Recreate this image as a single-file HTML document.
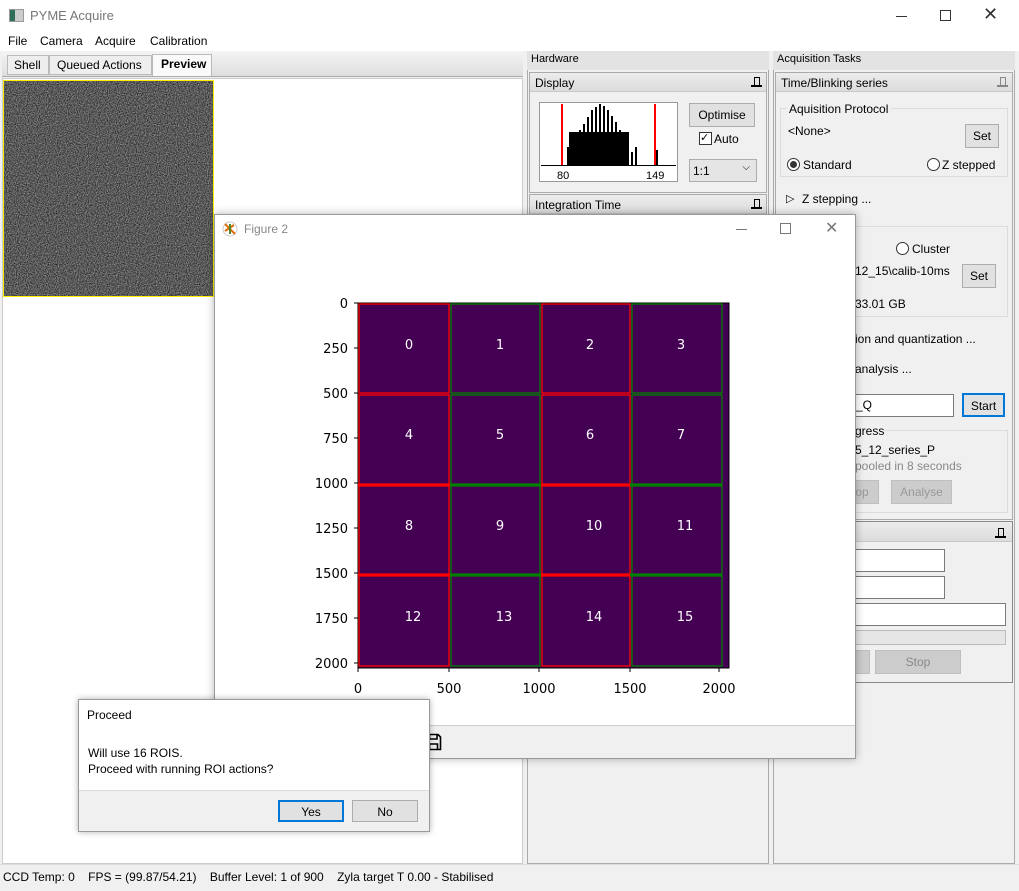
<!DOCTYPE html>
<html><head><meta charset="utf-8"><style>
*{box-sizing:border-box;margin:0;padding:0}
body{width:1019px;height:891px;position:relative;overflow:hidden;background:#f0f0f0;font-family:"Liberation Sans",sans-serif;font-size:12px;color:#000}
.a{position:absolute}
.btn{position:absolute;background:#e1e1e1;border:1px solid #adadad;text-align:center;font-size:12px}
.hdr{position:absolute;background:linear-gradient(#ececec,#dcdcdc);border-bottom:1px solid #c8c8c8}
.grp{position:absolute;border:1px solid #dcdcdc}
.inp{position:absolute;background:#fff;border:1px solid #7a7a7a}
.rad{position:absolute;width:13px;height:13px;border:1px solid #333;border-radius:50%;background:#fff}
.pin{position:absolute;width:6px;height:9px;border:1.5px solid #000;border-bottom:none}
.pin:after{content:"";position:absolute;left:-4px;top:7px;width:11px;height:1.5px;background:#000}
</style></head><body>
<div class="a" style="left:0;top:0;width:1019px;height:51px;background:#fff"></div>
<div class="a" style="left:9px;top:9px;width:15px;height:13px;border:1px solid #999;background:linear-gradient(90deg,#2e6e5a 40%,#ccc 40%)"></div>
<div class="a" style="left:30px;top:8px;font-size:13px;color:#777">PYME Acquire</div>
<div class="a" style="left:896px;top:16px;width:11px;height:1px;background:#333"></div>
<div class="a" style="left:940px;top:10px;width:11px;height:11px;border:1px solid #333"></div>
<div class="a" style="left:983px;top:4px;font-size:18px;color:#333">✕</div>
<div class="a" style="left:8px;top:34px;font-size:12px">File</div>
<div class="a" style="left:40px;top:34px">Camera</div>
<div class="a" style="left:95px;top:34px">Acquire</div>
<div class="a" style="left:150px;top:34px">Calibration</div>
<div class="a" style="left:2px;top:51px;width:521px;height:26px;background:linear-gradient(#f4f4f4,#dedede);border-bottom:1px solid #aaa"></div>
<div class="a" style="left:7px;top:55px;width:42px;height:20px;border:1px solid #bbb;background:#eee;padding:2px 6px">Shell</div>
<div class="a" style="left:49px;top:55px;width:103px;height:20px;border:1px solid #bbb;background:#eee;padding:2px 7px">Queued Actions</div>
<div class="a" style="left:152px;top:54px;width:60px;height:22px;border:1px solid #bbb;border-bottom:none;background:#fafafa;padding:2px 8px;font-weight:bold">Preview</div>
<div class="a" style="left:2px;top:78px;width:521px;height:786px;background:#fff;border:1px solid #ccc"></div>
<svg class="a" style="left:3px;top:80px" width="211" height="217"><filter id="n" x="0" y="0" width="100%" height="100%" color-interpolation-filters="sRGB"><feTurbulence type="fractalNoise" baseFrequency="0.9" numOctaves="2" seed="3"/><feColorMatrix type="matrix" values="0.8 0 0 0 -0.05 0.8 0 0 0 -0.05 0.8 0 0 0 -0.05 0 0 0 0 1"/></filter><rect width="211" height="217" filter="url(#n)"/><rect x=".5" y=".5" width="210" height="216" fill="none" stroke="#ffee00" stroke-width="1"/></svg>
<div class="a" style="left:527px;top:51px;width:242px;height:813px;border:1px solid #aaa;background:#f0f0f0"></div>
<div class="a" style="left:527px;top:51px;width:242px;height:19px;background:#e3e3e3;padding:2px 4px;font-size:11px">Hardware</div>
<div class="a" style="left:529px;top:72px;width:238px;height:121px;border:1px solid #aaa"></div>
<div class="hdr" style="left:530px;top:73px;width:236px;height:19px;padding:3px 5px">Display</div>
<div class="pin" style="left:754px;top:77px"></div>
<svg class="a" style="left:539px;top:102px" width="139" height="80"><rect x=".5" y=".5" width="138" height="79" fill="#fff" stroke="#999"/><g fill="#000"><path d="M28 63V45h2v18zM32 63V40h2v23zM36 63V35h2v28zM40 63V28h2v35zM44 63V22h2v41zM48 63V15h2v48zM52 63V8h2v55zM56 63V5h2v58zM60 63V2h2v61zM64 63V4h2v59zM68 63V8h2v55zM72 63V14h2v49zM76 63V20h2v43zM80 63V28h2v35zM84 63V35h2v28zM88 63V42h2v21zM92 63V50h2v13zM96 63V45h2v18z"/><rect x="30" y="30" width="60" height="33"/></g><rect x="22" y="2" width="2" height="62" fill="red"/><rect x="115" y="2" width="2" height="62" fill="red"/><rect x="117" y="48" width="2" height="15"/><line x1="2" y1="63.5" x2="137" y2="63.5" stroke="#000"/><text x="18" y="77" font-size="11" font-family="Liberation Sans">80</text><text x="107" y="77" font-size="11" font-family="Liberation Sans">149</text></svg>
<div class="btn" style="left:689px;top:103px;width:66px;height:24px;padding-top:4px">Optimise</div>
<div class="a" style="left:699px;top:132px;width:13px;height:13px;border:1px solid #333;background:#fff;font-size:11px;line-height:11px">✓</div>
<div class="a" style="left:714px;top:132px">Auto</div>
<div class="a" style="left:689px;top:159px;width:68px;height:23px;border:1px solid #adadad;background:#e5e5e5;padding:4px 3px">1:1<span style="position:absolute;right:6px;top:2px;font-size:10px">⌵</span></div>
<div class="a" style="left:529px;top:194px;width:238px;height:22px;border:1px solid #aaa"></div>
<div class="hdr" style="left:530px;top:195px;width:236px;height:19px;padding:3px 5px">Integration Time</div>
<div class="pin" style="left:754px;top:199px"></div>
<div class="a" style="left:773px;top:51px;width:242px;height:813px;border:1px solid #aaa;background:#f0f0f0"></div>
<div class="a" style="left:773px;top:51px;width:242px;height:19px;background:#e3e3e3;padding:2px 4px;font-size:11px">Acquisition Tasks</div>
<div class="a" style="left:775px;top:72px;width:238px;height:448px;border:1px solid #aaa"></div>
<div class="hdr" style="left:776px;top:73px;width:236px;height:19px;padding:3px 5px">Time/Blinking series</div>
<div class="pin" style="left:1000px;top:77px;opacity:.4"></div>
<div class="grp" style="left:780px;top:108px;width:228px;height:69px"></div>
<div class="a" style="left:786px;top:102px;background:#f0f0f0;padding:0 3px">Aquisition Protocol</div>
<div class="a" style="left:788px;top:124px">&lt;None&gt;</div>
<div class="btn" style="left:965px;top:124px;width:34px;height:24px;padding-top:4px">Set</div>
<div class="rad" style="left:787px;top:158px"><div style="margin:2px;width:7px;height:7px;border-radius:50%;background:#333"></div></div>
<div class="a" style="left:803px;top:158px">Standard</div>
<div class="rad" style="left:927px;top:158px"></div>
<div class="a" style="left:942px;top:158px">Z stepped</div>
<div class="a" style="left:786px;top:192px;font-size:11px">▷</div>
<div class="a" style="left:802px;top:192px">Z stepping ...</div>
<div class="grp" style="left:780px;top:226px;width:228px;height:91px"></div>
<div class="rad" style="left:896px;top:242px"></div>
<div class="a" style="left:912px;top:242px">Cluster</div>
<div class="a" style="left:855px;top:264px">12_15\calib-10ms</div>
<div class="btn" style="left:962px;top:264px;width:34px;height:24px;padding-top:4px">Set</div>
<div class="a" style="left:855px;top:297px">33.01 GB</div>
<div class="a" style="left:855px;top:332px">ion and quantization ...</div>
<div class="a" style="left:855px;top:362px">analysis ...</div>
<div class="inp" style="left:845px;top:394px;width:109px;height:23px;padding:3px 10px">_Q</div>
<div class="btn" style="left:962px;top:393px;width:43px;height:24px;padding-top:4px;border:2px solid #0078d7">Start</div>
<div class="grp" style="left:780px;top:430px;width:228px;height:83px"></div>
<div class="a" style="left:855px;top:424px;background:#f0f0f0">gress</div>
<div class="a" style="left:855px;top:443px">5_12_series_P</div>
<div class="a" style="left:855px;top:459px;color:#888">pooled in 8 seconds</div>
<div class="btn" style="left:845px;top:480px;width:34px;height:24px;padding-top:4px;color:#999;background:#ccc;border-color:#bfbfbf">op</div>
<div class="btn" style="left:891px;top:480px;width:61px;height:24px;padding-top:4px;color:#999;background:#ccc;border-color:#bfbfbf">Analyse</div>
<div class="a" style="left:775px;top:521px;width:238px;height:162px;border:1px solid #888"></div>
<div class="hdr" style="left:776px;top:522px;width:236px;height:20px"></div>
<div class="pin" style="left:998px;top:528px"></div>
<div class="inp" style="left:845px;top:549px;width:100px;height:23px"></div>
<div class="inp" style="left:845px;top:576px;width:100px;height:23px"></div>
<div class="inp" style="left:845px;top:603px;width:161px;height:23px"></div>
<div class="a" style="left:845px;top:630px;width:161px;height:15px;border:1px solid #bcbcbc;background:#e6e6e6"></div>
<div class="btn" style="left:845px;top:650px;width:25px;height:24px;background:#ccc;border-color:#bfbfbf"></div>
<div class="btn" style="left:875px;top:650px;width:86px;height:24px;padding-top:4px;color:#888;background:#ccc;border-color:#bfbfbf">Stop</div>
<div class="a" style="left:214px;top:214px;width:642px;height:545px;background:#fff;border:1px solid #999;box-shadow:0 0 8px rgba(0,0,0,.3)"></div>
<svg class="a" style="left:222px;top:221px" width="16" height="16"><circle cx="8" cy="8" r="7" fill="#fff" stroke="#ccc"/><path d="M3 3L13 13M3 10L12 4" stroke="#e36c0a" stroke-width="2"/><path d="M8 3L8 13" stroke="#4a8a2a" stroke-width="2"/></svg>
<div class="a" style="left:244px;top:222px;font-size:12px;color:#888">Figure 2</div>
<div class="a" style="left:736px;top:229px;width:11px;height:1px;background:#777"></div>
<div class="a" style="left:780px;top:223px;width:11px;height:11px;border:1px solid #777"></div>
<div class="a" style="left:825px;top:218px;font-size:16px;color:#777">✕</div>
<svg class="a" style="left:300px;top:290px" width="440" height="410" font-family="DejaVu Sans" font-size="13">
<rect x="58" y="13" width="371" height="365" fill="#440154" stroke="#000"/>
<g fill="none" stroke-width="1.3">
<rect x="59" y="14" width="90" height="89" stroke="red"/>
<rect x="151" y="14" width="89" height="89" stroke="green"/>
<rect x="242" y="14" width="88" height="89" stroke="red"/>
<rect x="332" y="14" width="90" height="89" stroke="green"/>
<rect x="59" y="105" width="90" height="89" stroke="red"/>
<rect x="151" y="105" width="89" height="89" stroke="green"/>
<rect x="242" y="105" width="88" height="89" stroke="red"/>
<rect x="332" y="105" width="90" height="89" stroke="green"/>
<rect x="59" y="196" width="90" height="88" stroke="red"/>
<rect x="151" y="196" width="89" height="88" stroke="green"/>
<rect x="242" y="196" width="88" height="88" stroke="red"/>
<rect x="332" y="196" width="90" height="88" stroke="green"/>
<rect x="59" y="286" width="90" height="90" stroke="red"/>
<rect x="151" y="286" width="89" height="90" stroke="green"/>
<rect x="242" y="286" width="88" height="90" stroke="red"/>
<rect x="332" y="286" width="90" height="90" stroke="green"/>
</g>
<g stroke-width="3"><path d="M58 195H150M241 195H330M58 285H150M241 285H330" stroke="red"/><path d="M150 195H241M330 195H422M150 285H241M330 285H422" stroke="green"/></g>
<g fill="#fff" text-anchor="middle"><text x="109" y="59">0</text><text x="200" y="59">1</text><text x="290" y="59">2</text><text x="381" y="59">3</text><text x="109" y="149">4</text><text x="200" y="149">5</text><text x="290" y="149">6</text><text x="381" y="149">7</text><text x="109" y="240">8</text><text x="200" y="240">9</text><text x="294" y="240">10</text><text x="385" y="240">11</text><text x="113" y="331">12</text><text x="204" y="331">13</text><text x="294" y="331">14</text><text x="385" y="331">15</text></g>
<g stroke="#000"><path d="M54 13H58M54 58H58M54 103H58M54 148H58M54 193H58M54 238H58M54 283H58M54 328H58M54 373H58M58 378V382M149 378V382M239 378V382M330 378V382M419 378V382"/></g>
<g text-anchor="end"><text x="48" y="18">0</text><text x="48" y="63">250</text><text x="48" y="108">500</text><text x="48" y="153">750</text><text x="48" y="198">1000</text><text x="48" y="243">1250</text><text x="48" y="288">1500</text><text x="48" y="333">1750</text><text x="48" y="378">2000</text></g>
<g text-anchor="middle"><text x="58" y="403">0</text><text x="149" y="403">500</text><text x="239" y="403">1000</text><text x="330" y="403">1500</text><text x="419" y="403">2000</text></g>
</svg>
<div class="a" style="left:215px;top:725px;width:640px;height:33px;background:#f0f0f0;border-top:1px solid #ccc"></div>
<svg class="a" style="left:425px;top:733px" width="17" height="18"><path d="M1.5 1.5H13L15.5 4V16.5H1.5Z M4.5 1.5V6H12V1.5 M4.5 16.5V11H12.5V16.5" fill="none" stroke="#000" stroke-width="1.6"/></svg>
<div class="a" style="left:78px;top:699px;width:352px;height:133px;background:#fff;border:1px solid #999;box-shadow:0 0 6px rgba(0,0,0,.3)"></div>
<div class="a" style="left:87px;top:708px">Proceed</div>
<div class="a" style="left:88px;top:745px;line-height:16px">Will use 16 ROIS.<br>Proceed with running ROI actions?</div>
<div class="a" style="left:79px;top:790px;width:350px;height:41px;background:#f0f0f0;border-top:1px solid #ddd"></div>
<div class="btn" style="left:278px;top:800px;width:66px;height:22px;padding-top:3px;border:2px solid #0078d7">Yes</div>
<div class="btn" style="left:352px;top:800px;width:66px;height:22px;padding-top:4px">No</div>
<div class="a" style="left:0;top:864px;width:1019px;height:27px;background:#f0f0f0;border-top:1px solid #ddd"></div>
<div class="a" style="left:3px;top:870px;word-spacing:0">CCD Temp: 0&nbsp;&nbsp;&nbsp; FPS = (99.87/54.21)&nbsp;&nbsp;&nbsp; Buffer Level: 1 of 900&nbsp;&nbsp;&nbsp; Zyla target T 0.00 - Stabilised</div>
</body></html>
